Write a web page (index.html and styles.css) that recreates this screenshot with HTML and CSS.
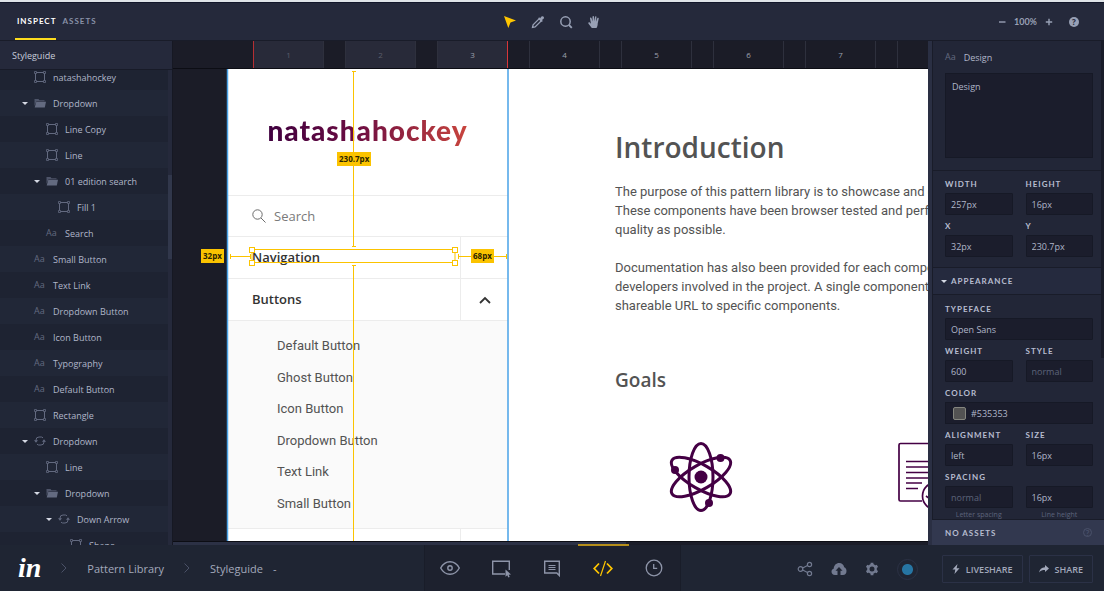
FILE: index.html
```html
<!DOCTYPE html>
<html lang="en">
<head>
<meta charset="UTF-8">
<meta name="viewport" content="width=device-width, initial-scale=1.0">
<title>Styleguide - Inspect</title>
<link rel="stylesheet" href="styles.css">
</head>
<body>

<!-- Shared icons -->
<svg class="sprite" aria-hidden="true">
    <symbol id="shape" viewBox="0 0 12 12">
        <path d="M2.5 1.5h7M2.5 10.5h7M1.5 2.5v7M10.5 2.5v7" fill="none" stroke="currentColor"/>
        <path d="M.5.5h2v2h-2zM9.500.5h2v2h-2zM.5 9.500h2v2h-2zM9.500 9.500h2v2h-2z" fill="none" stroke="currentColor" stroke-width=".8"/>
    </symbol>
    <symbol id="folder" viewBox="0 0 12 12">
        <path d="M.5 9V2h4l1 1.200h5V4.200H2.500z" fill="currentColor" opacity=".7"/>
        <path d="M2.300 4.800H12L10.800 10.500H.7z" fill="currentColor"/>
    </symbol>
    <symbol id="sync" viewBox="0 0 12 12">
        <path d="M2 6V5a3 3 0 0 1 3-3h2.500l1.500.8M10 6v1a3 3 0 0 1-3 3H4.500L3 9.200" fill="none" stroke="currentColor"/>
        <path d="M0 5.200h4L2 7.800zM8 6.800h4L10 4.200z" fill="currentColor"/>
    </symbol>
</svg>

<div class="app">
    <header class="topbar">
        <nav class="tabs">
            <a href="#inspect" class="tab active">INSPECT</a>
            <a href="#assets" class="tab">ASSETS</a>
        </nav>
        <div class="tools">
            <button type="button" class="tool active" aria-label="Select">
                <svg width="14" height="14" viewBox="0 0 14 14"><path d="M1 1l12 4.500-5.500 2L5.300 13z" fill="currentColor"/></svg>
            </button>
            <button type="button" class="tool" aria-label="Color picker">
                <svg width="14" height="14" viewBox="0 0 14 14"><path d="M1.500 12.500l.6-2.600 6-6 2 2-6 6z" fill="none" stroke="currentColor" stroke-width="1.300"/><path d="M7.200 3.300l1-1 .9.900 1.400-1.600c1.400-1.300 3.400.7 2.100 2.100L11 5.100l.8.800-1 1z" fill="currentColor"/></svg>
            </button>
            <button type="button" class="tool" aria-label="Zoom">
                <svg width="14" height="14" viewBox="0 0 14 14"><circle cx="6.500" cy="6.500" r="4.700" fill="none" stroke="currentColor" stroke-width="1.500"/><path d="M10 10l2.800 2.800" stroke="currentColor" stroke-width="1.800"/></svg>
            </button>
            <button type="button" class="tool" aria-label="Pan">
                <svg width="14" height="14" viewBox="0 0 14 14"><path d="M4.800 13L1.500 8.800c-.7-1 .5-1.900 1.300-1.200L4 8.700 3 3.400c-.2-1 1.200-1.300 1.500-.3L5.500 6.500V1.700c0-1 1.500-1 1.500 0v4.600L8 1.900c.2-1 1.600-.7 1.400.3L9 6.700l1.300-3.400c.4-.9 1.700-.4 1.400.5L10.700 8.500c0 2-.4 3.200-1.200 4.500z" fill="currentColor"/></svg>
            </button>
        </div>
        <div class="zoom">
            <button type="button" class="tool" aria-label="Zoom out">
                <svg width="8" height="8" viewBox="0 0 8 8"><path d="M1 4h6.500" stroke="currentColor" stroke-width="1.400"/></svg>
            </button>
            <span class="zoom-value">100%</span>
            <button type="button" class="tool" aria-label="Zoom in">
                <svg width="8" height="8" viewBox="0 0 8 8"><path d="M.8 4h6.400M4 .8v6.400" stroke="currentColor" stroke-width="1.400"/></svg>
            </button>
            <button type="button" class="help" aria-label="Help">?</button>
        </div>
    </header>

    <main class="workspace">
        <aside class="layers">
            <h2 class="layers-title">Styleguide</h2>
            <ul class="tree">
                <li class="row"><span class="toggle"></span><svg class="icon"><use href="#shape"/></svg>natashahockey</li>
                <li class="row"><span class="toggle open"></span><svg class="icon"><use href="#folder"/></svg>Dropdown</li>
                <li class="row level-1"><span class="toggle"></span><svg class="icon"><use href="#shape"/></svg>Line Copy</li>
                <li class="row level-1"><span class="toggle"></span><svg class="icon"><use href="#shape"/></svg>Line</li>
                <li class="row level-1"><span class="toggle open"></span><svg class="icon"><use href="#folder"/></svg>01 edition search</li>
                <li class="row level-2"><span class="toggle"></span><svg class="icon"><use href="#shape"/></svg>Fill 1</li>
                <li class="row level-1"><span class="toggle"></span><span class="icon aa">Aa</span>Search</li>
                <li class="row"><span class="toggle"></span><span class="icon aa">Aa</span>Small Button</li>
                <li class="row"><span class="toggle"></span><span class="icon aa">Aa</span>Text Link</li>
                <li class="row"><span class="toggle"></span><span class="icon aa">Aa</span>Dropdown Button</li>
                <li class="row"><span class="toggle"></span><span class="icon aa">Aa</span>Icon Button</li>
                <li class="row"><span class="toggle"></span><span class="icon aa">Aa</span>Typography</li>
                <li class="row"><span class="toggle"></span><span class="icon aa">Aa</span>Default Button</li>
                <li class="row"><span class="toggle"></span><svg class="icon"><use href="#shape"/></svg>Rectangle</li>
                <li class="row"><span class="toggle open"></span><svg class="icon"><use href="#sync"/></svg>Dropdown</li>
                <li class="row level-1"><span class="toggle"></span><svg class="icon"><use href="#shape"/></svg>Line</li>
                <li class="row level-1"><span class="toggle open"></span><svg class="icon"><use href="#folder"/></svg>Dropdown</li>
                <li class="row level-2"><span class="toggle open"></span><svg class="icon"><use href="#sync"/></svg>Down Arrow</li>
                <li class="row level-3"><span class="toggle"></span><svg class="icon"><use href="#shape"/></svg>Shape</li>
            </ul>
            <div class="scrollbar"></div>
        </aside>

        <section class="stage">
            <div class="ruler">
                <span class="column dim first">1</span>
                <span class="column dim">2</span>
                <span class="column selected">3</span>
                <span class="column">4</span>
                <span class="column">5</span>
                <span class="column">6</span>
                <span class="column">7</span>
                <span class="column"></span>
            </div>

            <div class="canvas">
                <div class="artboard">
                    <div class="side-nav">
                        <div class="brand"><span class="brand-name">natashahockey</span></div>
                        <div class="search">
                            <svg width="14" height="14" viewBox="0 0 14 14"><circle cx="5.500" cy="5.500" r="4.700" fill="none" stroke="currentColor"/><path d="M9 9l4.500 4.500" stroke="currentColor"/></svg>
                            <input type="text" class="search-input" placeholder="Search" aria-label="Search">
                        </div>
                        <div class="nav-item"><span class="nav-label">Navigation</span><span class="nav-toggle"></span></div>
                        <div class="nav-item">
                            <span class="nav-label">Buttons</span>
                            <button type="button" class="nav-toggle" aria-label="Collapse Buttons">
                                <svg width="12" height="8" viewBox="0 0 12 8"><path d="M1 7l5-5 5 5" fill="none" stroke="currentColor" stroke-width="1.800"/></svg>
                            </button>
                        </div>
                        <ul class="sub-nav">
                            <li><a href="#default">Default Button</a></li>
                            <li><a href="#ghost">Ghost Button</a></li>
                            <li><a href="#icon">Icon Button</a></li>
                            <li><a href="#dropdown">Dropdown Button</a></li>
                            <li><a href="#link">Text Link</a></li>
                            <li><a href="#small">Small Button</a></li>
                        </ul>
                        <div class="nav-item"><span class="nav-label"></span><span class="nav-toggle"></span></div>
                    </div>

                    <article class="page">
                        <h1>Introduction</h1>
                        <p>The purpose of this pattern library is to showcase and c<br>These components have been browser tested and perf<br>quality as possible.</p>
                        <p>Documentation has also been provided for each compo<br>developers involved in the project. A single component<br>shareable URL to specific components.</p>
                        <h2>Goals</h2>
                        <div class="goals">
                            <svg width="66" height="72" viewBox="0 0 66 72">
                                <g fill="none" stroke="#440044" stroke-width="3">
                                    <ellipse cx="33" cy="36" rx="12" ry="33.500"/>
                                    <ellipse cx="33" cy="36" rx="12" ry="33.500" transform="rotate(60 33 36)"/>
                                    <ellipse cx="33" cy="36" rx="12" ry="33.500" transform="rotate(-60 33 36)"/>
                                </g>
                                <g fill="#440044">
                                    <circle cx="33" cy="36" r="6.500"/>
                                    <circle cx="52.500" cy="17" r="4"/>
                                    <circle cx="7" cy="29" r="4"/>
                                    <circle cx="41" cy="62" r="4"/>
                                </g>
                            </svg>
                            <svg width="60" height="72" viewBox="0 0 60 72">
                                <g fill="none" stroke="#440044" stroke-width="1.700">
                                    <path d="M24 60H2.500A1.500 1.500 0 0 1 1 58.500V4a1.500 1.500 0 0 1 1.500-1.500H46V40"/>
                                    <path d="M8 20.500h32M8 26h32M8 31.500h32M8 37h32M8 42h16M8 47.500h12"/>
                                    <circle cx="38" cy="55" r="13.500"/>
                                    <path d="M28 55l7 5 11-10"/>
                                </g>
                            </svg>
                        </div>
                    </article>
                </div>

                <!-- Measurements of the selected layer -->
                <svg class="guides" width="340" height="472" viewBox="0 0 340 472">
                    <path d="M55.500 0v472M336 0v472" stroke="#4aa3e8" stroke-width="1.500" fill="none"/>
                    <g fill="none" stroke="#fbc300">
                        <path d="M181.500 2v175M180 2.500h4M180 177.500h4M181.500 196v276M180 196.500h4"/>
                        <path d="M58.500 187.500h20M58.500 185v5M78.500 185v5M286.500 187.500h48M286.500 185v5M334.500 185v5"/>
                        <rect x="80" y="180.500" width="203" height="13"/>
                    </g>
                    <g fill="#fff" stroke="#fbc300">
                        <rect x="77.500" y="178.500" width="5" height="5"/>
                        <rect x="280.500" y="178.500" width="5" height="5"/>
                        <rect x="77.500" y="191.500" width="5" height="5"/>
                        <rect x="280.500" y="191.500" width="5" height="5"/>
                    </g>
                </svg>
                <span class="measure measure-top">230.7px</span>
                <span class="measure measure-left">32px</span>
                <span class="measure measure-right">68px</span>
            </div>
            <div class="canvas-scroll"></div>
        </section>

        <aside class="inspector">
            <div class="inspector-body">
                <div class="group text-group">
                    <label class="layer-name" for="content"><span class="aa">Aa</span>Design</label>
                    <textarea id="content" class="content" readonly>Design</textarea>
                </div>
                <div class="group fields">
                    <div class="field"><label for="width">WIDTH</label><input id="width" type="text" value="257px"></div>
                    <div class="field"><label for="height">HEIGHT</label><input id="height" type="text" value="16px"></div>
                    <div class="field"><label for="x">X</label><input id="x" type="text" value="32px"></div>
                    <div class="field"><label for="y">Y</label><input id="y" type="text" value="230.7px"></div>
                </div>
                <button type="button" class="section-title"><span class="toggle open"></span>APPEARANCE</button>
                <div class="group fields">
                    <div class="field wide"><label for="typeface">TYPEFACE</label><input id="typeface" type="text" value="Open Sans"></div>
                    <div class="field"><label for="weight">WEIGHT</label><input id="weight" type="text" value="600"></div>
                    <div class="field"><label for="style">STYLE</label><input id="style" type="text" placeholder="normal"></div>
                    <div class="field wide">
                        <label for="color">COLOR</label>
                        <div class="color"><span class="swatch"></span><input id="color" type="text" value="#535353"></div>
                    </div>
                    <div class="field"><label for="alignment">ALIGNMENT</label><input id="alignment" type="text" value="left"></div>
                    <div class="field"><label for="size">SIZE</label><input id="size" type="text" value="16px"></div>
                    <div class="field">
                        <label for="letter">SPACING</label>
                        <input id="letter" type="text" placeholder="normal">
                        <small>Letter spacing</small>
                    </div>
                    <div class="field bottom">
                        <input id="line" type="text" value="16px" aria-label="Line height">
                        <small>Line height</small>
                    </div>
                </div>
            </div>
            <div class="no-assets">NO ASSETS<span class="hint">?</span></div>
            <div class="scrollbar"></div>
        </aside>
    </main>

    <footer class="bottombar">
        <nav class="breadcrumb">
            <a href="#home" class="logo">in</a>
            <svg width="6" height="10" viewBox="0 0 6 10"><path d="M.5.500L5 5 .5 9.500" fill="none" stroke="currentColor"/></svg>
            <a href="#project">Pattern Library</a>
            <svg width="6" height="10" viewBox="0 0 6 10"><path d="M.5.500L5 5 .5 9.500" fill="none" stroke="currentColor"/></svg>
            <a href="#screen">Styleguide<span class="more">-</span></a>
        </nav>
        <div class="modes">
            <button type="button" class="mode" aria-label="Preview">
                <svg width="20" height="20" viewBox="0 0 20 20" fill="none" stroke="currentColor" stroke-width="1.400"><path d="M.7 10C3 5.700 6.500 3.700 10 3.700s7 2 9.300 6.300c-2.300 4.300-5.800 6.300-9.300 6.300S3 14.300.7 10z"/><circle cx="10" cy="10" r="2.200"/></svg>
            </button>
            <button type="button" class="mode" aria-label="Build">
                <svg width="20" height="20" viewBox="0 0 20 20"><path d="M14 16H1.700V3.300h16.600V12" fill="none" stroke="currentColor" stroke-width="1.400"/><path d="M14.500 11.500v7.300l1.800-1.500 1 2.200 1.400-.6-1-2.200 2.300-.2z" fill="currentColor"/></svg>
            </button>
            <button type="button" class="mode" aria-label="Comment">
                <svg width="20" height="20" viewBox="0 0 20 20"><path d="M2.700 3.300h14.600v14.200l-2.500-2.500H2.700z" fill="none" stroke="currentColor" stroke-width="1.400"/><path d="M6.500 7.500h7M6.500 9.500h7M6.500 11.500h7" stroke="currentColor"/></svg>
            </button>
            <button type="button" class="mode active" aria-label="Inspect">
                <svg width="20" height="20" viewBox="0 0 20 20" fill="none" stroke="currentColor"><path d="M6 5.500L1.200 10.500 6 15.500M14 5.500l4.800 5-4.800 5" stroke-width="1.800"/><path d="M12.500 3L7.500 18" stroke-width="1.200"/></svg>
            </button>
            <button type="button" class="mode" aria-label="History">
                <svg width="20" height="20" viewBox="0 0 20 20" fill="none" stroke="currentColor" stroke-width="1.300"><circle cx="10" cy="10" r="7.800"/><path d="M9.700 6v4.300h3.500"/></svg>
            </button>
        </div>
        <div class="actions">
            <button type="button" class="action" aria-label="Share link">
                <svg width="16" height="16" viewBox="0 0 16 16" fill="none" stroke="currentColor" stroke-width="1.200"><circle cx="3.500" cy="8" r="2.300"/><circle cx="12.500" cy="3.500" r="2.100"/><circle cx="12.500" cy="12.500" r="2.100"/><path d="M5.700 7l4.800-2.500M5.700 9l4.800 2.500"/></svg>
            </button>
            <button type="button" class="action" aria-label="Upload">
                <svg width="16" height="16" viewBox="0 0 16 16"><path d="M4 14C1.800 14 .5 12.400.5 10.700c0-1.700 1-2.700 2.200-3C2.800 4.400 5.200 2 8.200 2c2.600 0 4.600 1.700 5 4.200 1.500.6 2.300 1.900 2.300 3.800 0 2.500-1.500 4-3.500 4H9.500V9.800h2L8 6 4.500 9.800h2V14z" fill="currentColor"/></svg>
            </button>
            <button type="button" class="action" aria-label="Settings">
                <svg width="14" height="14" viewBox="0 0 14 14"><circle cx="7" cy="7" r="3.700" fill="none" stroke="currentColor" stroke-width="2.400"/><path d="M7 .8v2.200M7 11v2.200M1.600 3.900l1.900 1.100M10.500 9l1.900 1.100M1.600 10.100L3.500 9M10.500 5l1.900-1.100" stroke="currentColor" stroke-width="2.800"/></svg>
            </button>
            <button type="button" class="status" aria-label="Online"></button>
            <button type="button" class="outlined">
                <svg width="8" height="10" viewBox="0 0 8 10"><path d="M5.500 0L.5 5.600h2.800L2.500 10l5-5.800H4.600z" fill="currentColor"/></svg>LIVESHARE
            </button>
            <button type="button" class="outlined">
                <svg width="10" height="8" viewBox="0 0 10 8"><path d="M6 0l4 3.500L6 7V5C3.500 5 1.500 5.500 0 7.500.6 4.300 2.500 2.300 6 2.200z" fill="currentColor"/></svg>SHARE
            </button>
        </div>
    </footer>
</div>

</body>
</html>
```
FILE: styles.css
```css
* {
    box-sizing: border-box;
}

body {
    margin: 0;
    font-family: "Open Sans", sans-serif;
    font-size: 10px;
    color: #b0b6c9;
    background-color: #1b1c27;
}

button, input, textarea {
    font-family: inherit;
    font-size: inherit;
    color: inherit;
    margin: 0;
    padding: 0;
    border: none;
    background: none;
}

button {
    display: flex;
    align-items: center;
    justify-content: center;
    cursor: pointer;
}

a {
    color: inherit;
    text-decoration: none;
}

ul {
    list-style: none;
    margin: 0;
    padding: 0;
}

h1, h2, p {
    margin: 0;
}

svg {
    flex: none;
}

.sprite {
    position: absolute;
    width: 0;
    height: 0;
}

.app {
    display: flex;
    flex-direction: column;
    height: 100vh;
    border-top: 2px solid #dfe4e8;
}

/* Top bar */
.topbar {
    display: grid;
    grid-template-columns: 1fr auto 1fr;
    height: 39px;
    background-color: #25293b;
    border-top: 1px solid #12162a;
    border-bottom: 1px solid #191c29;
}

.tabs {
    display: flex;
    gap: 6px;
    padding-left: 15px;
}

.tab {
    display: flex;
    align-items: center;
    font-family: Lato, sans-serif;
    font-size: 8px;
    font-weight: 700;
    letter-spacing: 1px;
    color: #8991a8;
    border-bottom: 2px solid transparent;
}

.tab.active {
    padding-left: 2px;
    color: #fff;
    border-bottom-color: #fddc1e;
}

.tools {
    display: flex;
    gap: 14px;
    align-items: center;
}

.tool {
    color: #98a0b5;
}

.tool.active {
    color: #ffc600;
}

.zoom {
    display: flex;
    align-items: center;
    justify-content: flex-end;
    gap: 8px;
    padding-right: 25px;
    color: #98a0b5;
}

.zoom-value {
    font-family: Lato, sans-serif;
    font-size: 9px;
    font-weight: 700;
}

.help {
    width: 10px;
    height: 10px;
    margin-left: 8px;
    border-radius: 50%;
    background-color: #98a0b5;
    color: #25293b;
    font-size: 8px;
    font-weight: 700;
}

/* Workspace */
.workspace {
    display: flex;
    flex: 1;
    min-height: 0;
}

.layers {
    position: relative;
    width: 172px;
    overflow: hidden;
    background-color: #25293b;
}

.layers-title {
    height: 29px;
    padding-left: 12px;
    line-height: 29px;
    font-size: 9px;
    font-weight: 400;
    color: #c8cddb;
    border-bottom: 1px solid #181b28;
}

.tree {
    height: calc(100% - 29px);
    margin-right: 4px;
    overflow: hidden;
}

.row {
    display: flex;
    align-items: center;
    height: 26px;
    padding-left: 21px;
    font-size: 9px;
    white-space: nowrap;
    background-color: #1e2332;
}

/* The list is scrolled a little */
.row:first-child {
    margin-top: -6px;
}

.row:nth-child(even) {
    background-color: #212737;
}

.level-1 { padding-left: 33px; }
.level-2 { padding-left: 45px; }
.level-3 { padding-left: 57px; }

.toggle {
    width: 8px;
    flex: none;
}

.toggle.open::before {
    content: "";
    display: block;
    width: 0;
    margin-left: 1px;
    border: 3px solid transparent;
    border-top-color: #d5d9e4;
    border-bottom: none;
}

.icon {
    width: 12px;
    height: 12px;
    margin: 0 7px 0 5px;
    color: #636a80;
}

.aa {
    font-size: 9px;
    line-height: 12px;
    color: #636a80;
}

.scrollbar {
    position: absolute;
    right: 0;
    top: 134px;
    width: 4px;
    height: 84px;
    background-color: #31374b;
}

/* Stage */
.stage {
    display: flex;
    flex-direction: column;
    flex: 1;
    min-width: 0;
    border-left: 1px solid #161823;
}

.ruler {
    display: flex;
    gap: 21px;
    height: 28px;
    padding-left: 80px;
    overflow: hidden;
    border-bottom: 1px solid #0c0d14;
}

.column {
    flex: none;
    width: 71px;
    line-height: 27px;
    font-size: 8px;
    text-align: center;
    color: #9da1ad;
    border: 1px solid #2e303d;
    border-width: 0 1px;
}

.column.dim {
    background-color: #282a39;
    color: #5b5e6c;
}

.column.first {
    border-left-color: #b52f33;
}

.column.selected {
    background-color: #282a39;
    border-right-color: #d8363a;
}

.canvas {
    position: relative;
    flex: 1;
    min-height: 0;
    padding-left: 54px;
}

.artboard {
    display: flex;
    height: 100%;
    overflow: hidden;
    background-color: #fff;
    color: #535353;
}

.canvas-scroll {
    height: 4px;
    border-top: 1px solid #0c0d14;
    background: linear-gradient(to right, #2c3145 60%, #1b1d29 60%);
}

/* Pattern library artboard */
.side-nav {
    flex: none;
    width: 281px;
}

.brand {
    display: flex;
    align-items: center;
    justify-content: center;
    height: 127px;
    padding-bottom: 5px;
    border-bottom: 1px solid #ececec;
}

.brand-name {
    font-family: Lato, sans-serif;
    font-size: 28px;
    font-weight: 900;
    letter-spacing: 1px;
    color: transparent;
    background: linear-gradient(to right, #3f003f, #6d0d42 45%, #c9453d);
    background-clip: text;
    -webkit-background-clip: text;
}

.search {
    display: flex;
    align-items: center;
    gap: 8px;
    height: 41px;
    padding-left: 25px;
    color: #6b6b6b;
    border-bottom: 1px solid #ececec;
}

.search-input {
    width: 180px;
    font-size: 13px;
}

.search-input::placeholder {
    color: #7a7a7a;
}

.nav-item {
    display: flex;
    height: 42px;
    font-size: 13px;
    font-weight: 600;
    line-height: 41px;
    color: #333;
    border-bottom: 1px solid #ececec;
}

.nav-label {
    flex: 1;
    padding-left: 25px;
}

.nav-toggle {
    width: 48px;
    height: 41px;
    border-left: 1px solid #ececec;
}

.sub-nav {
    display: flex;
    flex-direction: column;
    height: 208px;
    padding: 9px 0 9px 50px;
    font-family: Roboto, sans-serif;
    font-size: 13px;
    background-color: #fafafa;
    border-bottom: 1px solid #ececec;
}

.sub-nav li {
    display: flex;
    align-items: center;
    flex: 1;
}

.page {
    flex: none;
    padding: 59px 0 0 107px;
    font-size: 13px;
    line-height: 19px;
    white-space: nowrap;
}

.page h1 {
    margin-bottom: 16px;
    font-size: 28px;
    font-weight: 600;
    line-height: 38px;
}

.page p {
    margin-bottom: 19px;
    font-family: Roboto, sans-serif;
}

.page h2 {
    margin: 52px 0 48px;
    font-size: 19px;
    font-weight: 600;
    line-height: 26px;
}

.goals {
    display: flex;
    gap: 164px;
    padding-left: 53px;
}

/* Measurements */
.guides {
    position: absolute;
    left: -1px;
    top: 0;
}

.measure {
    position: absolute;
    padding: 0 2px;
    font-size: 8px;
    font-weight: 700;
    line-height: 14px;
    color: #2c2400;
    background-color: #fbc300;
}

.measure-top {
    left: 164px;
    top: 83px;
}

.measure-left {
    left: 28px;
    top: 180px;
}

.measure-right {
    left: 298px;
    top: 180px;
}

/* Inspector */
.inspector {
    position: relative;
    display: flex;
    flex-direction: column;
    width: 176px;
    border-left: 4px solid #2a2f43;
    background-color: #222637;
}

.inspector .scrollbar {
    top: 0;
    width: 3px;
    height: 317px;
    background-color: #191c29;
}

.inspector-body {
    flex: 1;
    min-height: 0;
    overflow: hidden;
    border-left: 1px solid #191c29;
}

.group {
    padding: 7px 11px 10px 12px;
}

.text-group {
    padding-top: 10px;
    padding-bottom: 12px;
    border-bottom: 1px solid #191c29;
}

.layer-name {
    display: flex;
    gap: 8px;
    height: 22px;
    line-height: 13px;
    font-size: 9px;
}

.content {
    display: block;
    width: 100%;
    height: 85px;
    padding: 6px;
    font-size: 9px;
    resize: none;
    background-color: #1b1d2c;
    border: 1px solid #161926;
}

.fields {
    display: grid;
    grid-template-columns: 1fr 1fr;
    gap: 5px 13px;
}

.field {
    display: flex;
    flex-direction: column;
    gap: 3px;
    min-width: 0;
}

.field.wide {
    grid-column: span 2;
}

.field.bottom {
    padding-top: 15px;
}

.field label,
.section-title,
.no-assets {
    font-family: Lato, sans-serif;
    font-size: 8px;
    font-weight: 700;
    line-height: 12px;
    letter-spacing: 1px;
    color: #b7bdd0;
}

.field input {
    width: 100%;
    height: 22px;
    padding: 0 5px;
    font-size: 9px;
    background-color: #1b1d2c;
    border: 1px solid #161926;
    border-radius: 1px;
}

.field input::placeholder {
    color: #5d647b;
}

.field small {
    font-size: 7px;
    line-height: 8px;
    text-align: center;
    color: #5d647b;
}

.color {
    display: flex;
    align-items: center;
    height: 22px;
    padding-left: 7px;
    background-color: #1b1d2c;
    border: 1px solid #161926;
}

.color input {
    height: 20px;
    border: none;
}

.swatch {
    flex: none;
    width: 13px;
    height: 13px;
    background-color: #535353;
    border: 1px solid #85867f;
    border-radius: 2px;
}

.section-title {
    justify-content: flex-start;
    width: 100%;
    height: 28px;
    padding-left: 7px;
    gap: 3px;
    background-color: #252a3e;
    border: 1px solid #191c29;
    border-width: 1px 0;
}

.section-title + .fields {
    padding-top: 8px;
}

.no-assets {
    display: flex;
    align-items: center;
    justify-content: space-between;
    height: 26px;
    padding: 0 12px 0 13px;
    background-color: #32384f;
    border-top: 1px solid #191c29;
}

.hint {
    width: 9px;
    height: 9px;
    line-height: 8px;
    text-align: center;
    letter-spacing: 0;
    color: #4a516a;
    border: 1px solid #4a516a;
    border-radius: 50%;
}

/* Bottom bar */
.bottombar {
    display: grid;
    grid-template-columns: 1fr auto 1fr;
    height: 46px;
    background-color: #1f2533;
}

.breadcrumb {
    display: flex;
    align-items: center;
    gap: 20px;
    padding-left: 18px;
    font-size: 11px;
    color: #a3a9bb;
}

.breadcrumb svg {
    color: #4a5167;
}

.logo {
    font-family: "Liberation Serif", serif;
    font-size: 28px;
    font-weight: 700;
    font-style: italic;
    line-height: 28px;
    color: #fff;
}

.more {
    margin-left: 10px;
}

.modes {
    display: flex;
    background-color: #1d212e;
    border: 1px solid #191d29;
    border-width: 0 1px;
}

.mode {
    position: relative;
    width: 51px;
    color: #8e95a9;
}

.mode.active {
    color: #ffc600;
}

.mode.active::before {
    content: "";
    position: absolute;
    left: 0;
    right: 0;
    top: -1px;
    height: 2px;
    background-color: #b58e1b;
}

.actions {
    display: flex;
    align-items: center;
    justify-content: flex-end;
    padding: 2px 11px 0 0;
}

.action {
    margin-right: 18px;
    color: #727a90;
}

.status {
    width: 21px;
    height: 21px;
    margin-right: 24px;
    border: 1px solid #2b3144;
    border-radius: 50%;
    background: radial-gradient(circle, #2675a3 5px, transparent 6px);
}

.outlined {
    gap: 6px;
    height: 28px;
    padding: 0 9px;
    font-size: 9px;
    font-weight: 600;
    color: #a3a9bb;
    border: 1px solid #2b3146;
    border-radius: 1px;
}

.outlined + .outlined {
    margin-left: 6px;
}
```
